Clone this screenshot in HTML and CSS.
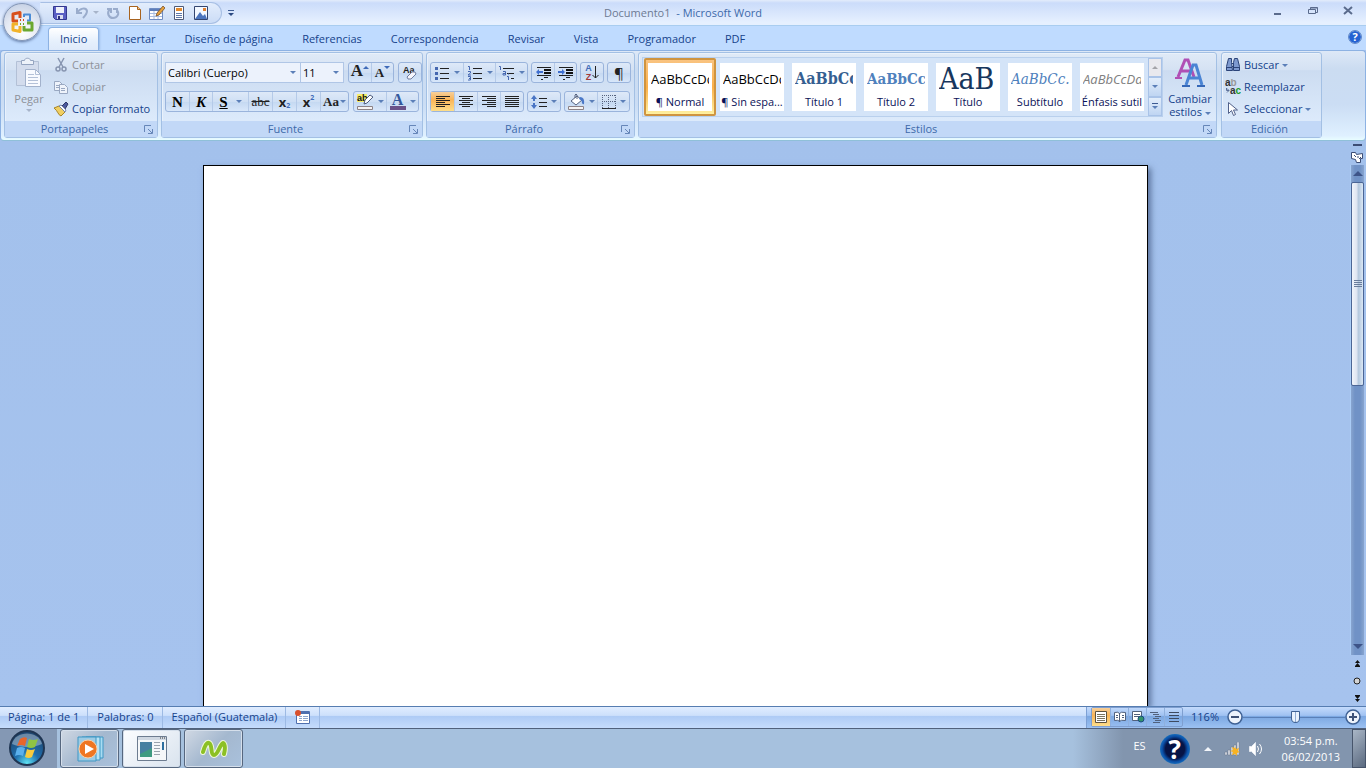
FILE: index.html
```html
<!DOCTYPE html>
<html lang="es">
<head>
    <meta charset="UTF-8">
    <meta name="viewport" content="width=device-width, initial-scale=1.0">
    <title>Documento1 - Microsoft Word</title>
    <link rel="stylesheet" href="styles.css">
</head>
<body>
    <header class="titlebar">
        <button class="office-button" aria-label="Botón de Office">
            <svg width="26" height="26" viewBox="0 0 26 26" fill="none" stroke-width="3" stroke-linejoin="round">
                <path d="M11 9V3.500L4 5v7h5" stroke="#d8501c"/>
                <path d="M15 8V5.500h6v6h-3" stroke="#4b8cd6" stroke-width="2"/>
                <path d="M9 15H4v6l7 1.500V17" stroke="#f2b32a"/>
                <path d="M18 14h5v7h-8v-4" stroke="#6ba82f"/>
                <path d="M11 11h1M14 11h1" stroke="#d8501c" stroke-width="2"/>
                <path d="M11 15h1M14 15h1" stroke="#6ba82f" stroke-width="2"/>
            </svg>
        </button>
        <div class="title-left">
            <div class="quick-access">
                <button aria-label="Guardar">
                    <svg width="16" height="16" viewBox="0 0 16 16">
                        <path d="M1.500 1.500h13v13h-11l-2-2z" fill="#5a5fc4" stroke="#34388f"/>
                        <path d="M4 2h8v6H4z" fill="#eef1fb"/>
                        <path d="M5 10h6v4H5z" fill="#d9dcf0"/>
                        <path d="M6 11h2v3H6z" fill="#2b2f77"/>
                    </svg>
                </button>
                <button class="undo" aria-label="Deshacer">
                    <svg width="16" height="16" viewBox="0 0 16 16" fill="none" stroke="#9aaccc" stroke-width="2">
                        <path d="M3 3v5h5M3 8c3-5 9-6 10-2 0 3-2 5-4 7"/>
                    </svg>
                    <span class="caret faded"></span>
                </button>
                <button aria-label="Rehacer">
                    <svg width="16" height="16" viewBox="0 0 16 16" fill="none" stroke="#9aaccc" stroke-width="2">
                        <path d="M5 4c-4 4-1 9 3 9s7-4 4-8M8 4h4v4M2 4h4v4"/>
                    </svg>
                </button>
                <button aria-label="Nuevo">
                    <svg width="16" height="16" viewBox="0 0 16 16">
                        <path d="M2.500 1.500h8l3 3v10h-11z" fill="#fff" stroke="#a8631f"/>
                        <path d="M10.500 1.500v3h3" fill="#f6c788" stroke="#a8631f"/>
                    </svg>
                </button>
                <button aria-label="Dibujar tabla">
                    <svg width="16" height="16" viewBox="0 0 16 16">
                        <path d="M.5 3.500h13v11H.5z" fill="#fff" stroke="#6f8cc2"/>
                        <path d="M1 4h12v2H1z" fill="#5c7dba"/>
                        <path d="M1 8.500h12M1 11.500h12M5 6v8M9 6v8" stroke="#a9bde0"/>
                        <path d="M7 11l1-3 6-7 2 2-6 7z" fill="#e6a13c" stroke="#694424" stroke-width=".7"/>
                    </svg>
                </button>
                <button aria-label="Vista previa">
                    <svg width="16" height="16" viewBox="0 0 16 16">
                        <path d="M3.500 1.500h9v13h-9z" fill="#fff" stroke="#4e5a78"/>
                        <path d="M5 3h6v3H5z" fill="#e58b2c"/>
                        <path d="M5 8.500h6M5 10.500h6M5 12.500h6" stroke="#6078a8"/>
                    </svg>
                </button>
                <button aria-label="Imagen">
                    <svg width="16" height="16" viewBox="0 0 16 16">
                        <path d="M1.500 1.500h13v13h-13z" fill="#f3f8ff" stroke="#34456f"/>
                        <path d="M2 14l5-7 3 4 2-2 2 5z" fill="#4b74bd"/>
                        <path d="M10 3h3v3h-3z" fill="#e08030"/>
                    </svg>
                </button>
            </div>
            <button class="customize" aria-label="Personalizar barra"><span class="caret dark"></span></button>
        </div>
        <h1 class="window-title"><span class="document-name">Documento1</span> &nbsp;- Microsoft Word</h1>
        <div class="window-buttons">
            <button aria-label="Minimizar">
                <svg width="10" height="10" viewBox="0 0 10 10"><path d="M1 7h7v2H1z" fill="#5a6b8c"/></svg>
            </button>
            <button aria-label="Restaurar">
                <svg width="10" height="10" viewBox="0 0 10 10" fill="none" stroke="#5a6b8c"><path d="M2.500 3V1.500h7v5H8M.5 3.500h7v4h-7zM2.500 2h7"/></svg>
            </button>
            <button aria-label="Cerrar">
                <svg width="10" height="10" viewBox="0 0 10 10" stroke="#5a6b8c" stroke-width="2"><path d="M1 1l8 7M9 1L1 8"/></svg>
            </button>
        </div>
    </header>

    <nav class="tabs">
        <button class="tab active">Inicio</button>
        <button class="tab">Insertar</button>
        <button class="tab">Diseño de página</button>
        <button class="tab">Referencias</button>
        <button class="tab">Correspondencia</button>
        <button class="tab">Revisar</button>
        <button class="tab">Vista</button>
        <button class="tab">Programador</button>
        <button class="tab">PDF</button>
        <button class="help" aria-label="Ayuda">?</button>
    </nav>

    <section class="ribbon">
        <div class="group clipboard">
            <div class="group-body">
                <button class="big-button disabled">
                    <svg width="32" height="32" viewBox="0 0 32 32">
                        <path d="M3.500 4.500h22v24h-22z" fill="#d3dced" stroke="#b3c0d6"/>
                        <path d="M8.500 3.500h3c0-3 6-3 6 0h3v4h-12z" fill="#edf2fa" stroke="#94a4c0"/>
                        <path d="M12.500 12.500h10l5 5v12h-15z" fill="#f8faff" stroke="#a3b2cc"/>
                        <path d="M22.500 12.500v5h5M15 17.500h6M15 20.500h10M15 23.500h10M15 26.500h10" fill="none" stroke="#b4c1d8"/>
                    </svg>
                    <span>Pegar</span>
                    <span class="caret faded"></span>
                </button>
                <div class="stack">
                    <button class="small-button disabled">
                        <svg width="16" height="16" viewBox="0 0 16 16" fill="none" stroke="#8795b0" stroke-width="1.500">
                            <path d="M5 1l5 9M11 1L6 10"/><circle cx="5" cy="12" r="2"/><circle cx="11" cy="12" r="2"/>
                        </svg>
                        Cortar
                    </button>
                    <button class="small-button disabled">
                        <svg width="16" height="16" viewBox="0 0 16 16" fill="#eef3fb" stroke="#99a8c2">
                            <path d="M1.500 2.500h5l3 3v6h-8zM3 6.500h4M3 8.500h4"/><path d="M6.500 5.500h5l3 3v6h-8zM8 9.500h4M8 11.500h4"/>
                        </svg>
                        Copiar
                    </button>
                    <button class="small-button">
                        <svg width="16" height="16" viewBox="0 0 16 16">
                            <path d="M9 5l4-4 2 2-3 5z" fill="#4c5a9e" stroke="#2e3767"/>
                            <path d="M1 7l5-2 6 6-4 4c-3-1-3-5-7-8z" fill="#f0cf63" stroke="#a88526"/>
                            <path d="M6 5l2-1 5 5-1 2z" fill="#fff" stroke="#7584a8"/>
                        </svg>
                        Copiar formato
                    </button>
                </div>
            </div>
            <div class="group-title"><span>Portapapeles</span><button class="launcher" aria-label="Opciones de portapapeles"><svg width="9" height="9" viewBox="0 0 9 9"><path d="M.5 7V.5H7M4 4l4 4M8.500 4v4.500H4" fill="none" stroke="#6686b8"/></svg></button></div>
        </div>

        <div class="group font-group">
            <div class="group-body rows">
                <div class="row">
                    <div class="combos">
                        <label class="combo font-name">
                            <select aria-label="Fuente"><option>Calibri (Cuerpo)</option></select>
                            <span class="caret"></span>
                        </label>
                        <label class="combo font-size">
                            <select aria-label="Tamaño de fuente"><option>11</option></select>
                            <span class="caret"></span>
                        </label>
                    </div>
                    <div class="button-set resize">
                        <button class="serif grow" aria-label="Agrandar fuente">A<span class="mark up"></span></button>
                        <button class="serif shrink" aria-label="Encoger fuente">A<span class="mark down"></span></button>
                    </div>
                    <div class="button-set">
                        <button aria-label="Borrar formato">
                            <svg width="16" height="16" viewBox="0 0 16 16">
                                <text x="1" y="8" font-size="9" class="icon-text" fill="#222">Aa</text>
                                <path d="M5 12l5-5q4-1 4 2l-5 5q-4 1-4-2z" fill="#f6f6fc" stroke="#6f7da0"/>
                            </svg>
                        </button>
                    </div>
                </div>
                <div class="row">
                    <div class="button-set">
                        <button class="serif bold">N</button>
                        <button class="serif bold italic">K</button>
                        <button class="serif bold wide"><u>S</u><span class="caret"></span></button>
                        <button class="serif strike"><s>abc</s></button>
                        <button class="script">x<sub>2</sub></button>
                        <button class="script">x<sup>2</sup></button>
                        <button class="serif case">Aa<span class="caret"></span></button>
                    </div>
                    <div class="button-set">
                        <button class="wide" aria-label="Color de resaltado">
                            <svg width="18" height="17" viewBox="0 0 18 17">
                                <path d="M1 1h10v8H1z" fill="#f6ee6b"/>
                                <text x="1" y="8" font-size="9" class="icon-text" fill="#111">ab</text>
                                <path d="M8 11l1-4 5-5 3 2-6 6z" fill="#fff" stroke="#4c5b7c"/>
                                <path d="M1.500 13.500h15v3h-15z" fill="#f6f4f4" stroke="#8c8286"/>
                            </svg>
                            <span class="caret"></span>
                        </button>
                        <button class="wide" aria-label="Color de fuente">
                            <span class="font-color">A</span>
                            <span class="caret"></span>
                        </button>
                    </div>
                </div>
            </div>
            <div class="group-title"><span>Fuente</span><button class="launcher" aria-label="Opciones de fuente"><svg width="9" height="9" viewBox="0 0 9 9"><path d="M.5 7V.5H7M4 4l4 4M8.500 4v4.500H4" fill="none" stroke="#6686b8"/></svg></button></div>
        </div>

        <div class="group paragraph">
            <div class="group-body rows">
                <div class="row">
                    <div class="button-set">
                        <button class="wide" aria-label="Viñetas">
                            <svg width="16" height="16" viewBox="0 0 16 16"><path d="M6 3.500h9M6 8.500h9M6 13.500h9" stroke="#222"/><path d="M1 2h3v3H1zM1 7h3v3H1zM1 12h3v3H1z" fill="#4567b0"/></svg>
                            <span class="caret"></span>
                        </button>
                        <button class="wide" aria-label="Numeración">
                            <svg width="16" height="16" viewBox="0 0 16 16"><path d="M6 3.500h9M6 8.500h9M6 13.500h9" stroke="#222"/><path d="M1 1.500h1.500V5M1 6.500h2.500v1.500L1 10h3M1 11.500h2.500v3.500H1M2 13.500h1" fill="none" stroke="#4567b0"/></svg>
                            <span class="caret"></span>
                        </button>
                        <button class="wide" aria-label="Lista multinivel">
                            <svg width="17" height="16" viewBox="0 0 17 16"><path d="M5 3.500h11M9 8.500h7M13 13.500h3" stroke="#222"/><path d="M1 1.500h1.500V5M5 6.500h2.500V10H5V8.500h2M9 11.500h1.500V15M10 9h1" fill="none" stroke="#4567b0"/></svg>
                            <span class="caret"></span>
                        </button>
                    </div>
                    <div class="button-set">
                        <button aria-label="Disminuir sangría">
                            <svg width="17" height="16" viewBox="0 0 17 16"><path d="M2 2.500h14M9 4.500h7M9 7.500h5M2 10.500h14M9 12.500h4M6 14.500h2" stroke="#222"/><path d="M9 5h7M9 8h7" stroke="#111" stroke-width="2"/><path d="M1 7l3-3v2h4v2H4v2z" fill="#3f6fd0"/></svg>
                        </button>
                        <button aria-label="Aumentar sangría">
                            <svg width="17" height="16" viewBox="0 0 17 16"><path d="M2 2.500h14M9 4.500h7M9 7.500h5M2 10.500h14M9 12.500h4M6 14.500h2" stroke="#222"/><path d="M9 5h7M9 8h7" stroke="#111" stroke-width="2"/><path d="M8 7L5 4v2H1v2h4v2z" fill="#3f6fd0"/></svg>
                        </button>
                    </div>
                    <div class="button-set">
                        <button class="sort" aria-label="Ordenar">
                            <span class="sort-letters"><b>A</b><b>Z</b></span>
                            <svg width="7" height="15" viewBox="0 0 7 15"><path d="M3.500 1v12M.5 10l3 3 3-3" fill="none" stroke="#222"/></svg>
                        </button>
                    </div>
                    <div class="button-set">
                        <button class="pilcrow">¶</button>
                    </div>
                </div>
                <div class="row">
                    <div class="button-set align">
                        <button class="pressed" aria-label="Alinear a la izquierda">
                            <svg width="14" height="13" viewBox="0 0 14 13"><path d="M0 1.500h14M0 3.500h9M0 5.500h14M0 7.500h9M0 9.500h14M0 11.500h9" stroke="#222"/></svg>
                        </button>
                        <button aria-label="Centrar">
                            <svg width="14" height="13" viewBox="0 0 14 13"><path d="M0 1.500h14M3 3.500h8M0 5.500h14M3 7.500h8M0 9.500h14M3 11.500h8" stroke="#222"/></svg>
                        </button>
                        <button aria-label="Alinear a la derecha">
                            <svg width="14" height="13" viewBox="0 0 14 13"><path d="M0 1.500h14M5 3.500h9M0 5.500h14M5 7.500h9M0 9.500h14M5 11.500h9" stroke="#222"/></svg>
                        </button>
                        <button aria-label="Justificar">
                            <svg width="14" height="13" viewBox="0 0 14 13"><path d="M0 1.500h14M0 3.500h14M0 5.500h14M0 7.500h14M0 9.500h14M0 11.500h14" stroke="#222"/></svg>
                        </button>
                    </div>
                    <div class="button-set">
                        <button class="wide" aria-label="Interlineado">
                            <svg width="16" height="16" viewBox="0 0 16 16"><path d="M8 4.500h8M8 8.500h8M8 12.500h8" stroke="#222"/><path d="M0 5l3-4 3 4H4v2H2V5zM0 11l3 4 3-4H4V9H2v2z" fill="#4a75c4"/></svg>
                            <span class="caret"></span>
                        </button>
                    </div>
                    <div class="button-set">
                        <button class="wide" aria-label="Sombreado">
                            <svg width="17" height="17" viewBox="0 0 17 17"><path d="M3 8l6-5 5 4-6 5z" fill="#fff" stroke="#56637f"/><path d="M7 5V2q1-2 2 0v4" fill="none" stroke="#56637f"/><path d="M12 4q5 0 4 7-1 1-2-1 0-3-3-4z" fill="#4a78c8"/><path d="M.5 13.500h15v3H.5z" fill="#f6f4f4" stroke="#8c8286"/></svg>
                            <span class="caret"></span>
                        </button>
                        <button class="wide" aria-label="Bordes">
                            <svg width="14" height="14" viewBox="0 0 14 14"><path d="M0 .5h14M0 6.500h14M.5 0v13M6.500 0v13M13.500 0v13" stroke="#56637f" stroke-dasharray="1 1"/><path d="M0 13.500h14" stroke="#222"/></svg>
                            <span class="caret"></span>
                        </button>
                    </div>
                </div>
            </div>
            <div class="group-title"><span>Párrafo</span><button class="launcher" aria-label="Opciones de párrafo"><svg width="9" height="9" viewBox="0 0 9 9"><path d="M.5 7V.5H7M4 4l4 4M8.500 4v4.500H4" fill="none" stroke="#6686b8"/></svg></button></div>
        </div>

        <div class="group styles-group">
            <div class="group-body">
                <div class="gallery">
                    <button class="style-item selected"><span class="card"><span class="sample">AaBbCcDd</span><span class="style-name">¶ Normal</span></span></button>
                    <button class="style-item"><span class="card"><span class="sample">AaBbCcDd</span><span class="style-name">¶ Sin espa...</span></span></button>
                    <button class="style-item"><span class="card"><span class="sample heading1">AaBbCc</span><span class="style-name">Título 1</span></span></button>
                    <button class="style-item"><span class="card"><span class="sample heading2">AaBbCc</span><span class="style-name">Título 2</span></span></button>
                    <button class="style-item"><span class="card"><span class="sample title">AaB</span><span class="style-name">Título</span></span></button>
                    <button class="style-item"><span class="card"><span class="sample subtitle">AaBbCc.</span><span class="style-name">Subtítulo</span></span></button>
                    <button class="style-item"><span class="card"><span class="sample subtle">AaBbCcDd</span><span class="style-name">Énfasis sutil</span></span></button>
                    <div class="gallery-scroll">
                        <button class="off" aria-label="Fila anterior"><span class="caret flip"></span></button>
                        <button aria-label="Fila siguiente"><span class="caret"></span></button>
                        <button class="more" aria-label="Más"><span class="caret"></span></button>
                    </div>
                </div>
                <button class="big-button change-styles">
                    <svg width="32" height="32" viewBox="0 0 32 32">
                        <path d="M4 20L11 3h3l6 17M7 14h10" fill="none" stroke="#b04fb5" stroke-width="3"/>
                        <path d="M1 21h7M15 21h6" stroke="#b04fb5" stroke-width="2"/>
                        <path d="M12 28L19 8h3l6 20M15 21h11" fill="none" stroke="#4a84d4" stroke-width="3"/>
                        <path d="M8 29h8M23 29h8" stroke="#3568b8" stroke-width="2"/>
                    </svg>
                    <span>Cambiar</span>
                    <span>estilos <span class="caret"></span></span>
                </button>
            </div>
            <div class="group-title"><span>Estilos</span><button class="launcher" aria-label="Opciones de estilos"><svg width="9" height="9" viewBox="0 0 9 9"><path d="M.5 7V.5H7M4 4l4 4M8.500 4v4.500H4" fill="none" stroke="#6686b8"/></svg></button></div>
        </div>

        <div class="group editing">
            <div class="group-body">
                <div class="stack">
                    <button class="small-button">
                        <svg width="16" height="16" viewBox="0 0 16 16" fill="#7e9ad0" stroke="#2c4479"><path d="M3.500 1.500h3v4l1 8h-6v-4zM9.500 1.500h3l2 8v4h-6v-8zM7 6.500h2M7 9.500h2M2 10.500h5M9 10.500h5"/></svg>
                        Buscar <span class="caret"></span>
                    </button>
                    <button class="small-button">
                        <svg width="16" height="16" viewBox="0 0 16 16">
                            <text x="0" y="7" font-size="10" class="icon-text" fill="#333">a<tspan fill="#999">b</tspan></text>
                            <text x="5" y="15" font-size="10" class="icon-text" fill="#333">a<tspan fill="#1c9a2c">c</tspan></text>
                            <path d="M1.500 9v2.500H4M2 9.500l2 2-2 2" fill="none" stroke="#5a6f98"/>
                        </svg>
                        Reemplazar
                    </button>
                    <button class="small-button">
                        <svg width="16" height="16" viewBox="0 0 16 16"><path d="M3.500 1.500v11l3-3 2 5 2-1-2-4.500h4z" fill="#fff" stroke="#51618a"/></svg>
                        Seleccionar <span class="caret"></span>
                    </button>
                </div>
            </div>
            <div class="group-title"><span>Edición</span></div>
        </div>
    </section>

    <main class="workspace">
        <div class="canvas">
            <div class="paper" contenteditable="true" spellcheck="false" role="textbox" aria-label="Documento"></div>
        </div>
        <div class="scroll-column">
            <div class="split-bar"></div>
            <button class="ruler-toggle" aria-label="Regla">
                <svg width="12" height="12" viewBox="0 0 12 12" fill="#fff" stroke="#3c4d75"><path d="M.5 1.500h4l1 2 6-1v5h-2v4h-4l-1-3-4-1zM3 4l2 2M7 5v2M8 8l2-2"/></svg>
            </button>
            <div class="scrollbar">
                <button class="scroll-arrow" aria-label="Subir"><span class="arrow up"></span></button>
                <div class="thumb"><span class="grip"></span></div>
                <div class="track"></div>
                <button class="scroll-arrow" aria-label="Bajar"><span class="arrow down"></span></button>
            </div>
            <div class="browse">
                <button aria-label="Página anterior"><svg width="7" height="8" viewBox="0 0 7 8"><path d="M3.500 0L6 3H1zM3.500 3L6 6H1zM1 6h5v1H1z" fill="#111"/></svg></button>
                <button aria-label="Seleccionar objeto"><svg width="8" height="8" viewBox="0 0 8 8"><circle cx="4" cy="4" r="3" fill="#d4d4d4" stroke="#222"/></svg></button>
                <button aria-label="Página siguiente"><svg width="7" height="8" viewBox="0 0 7 8"><path d="M3.500 8L6 5H1zM3.500 5L6 2H1zM1 1h5v1H1z" fill="#111"/></svg></button>
            </div>
        </div>
    </main>

    <footer class="statusbar">
        <button class="status-item">Página: 1 de 1</button>
        <button class="status-item">Palabras: 0</button>
        <button class="status-item">Español (Guatemala)</button>
        <button class="status-item macro" aria-label="Grabar macro">
            <svg width="16" height="14" viewBox="0 0 16 14"><path d="M1.500 1.500h13v12h-13z" fill="#fff" stroke="#4f6fae"/><path d="M2 2h12v2H2z" fill="#4f6fae"/><path d="M4 6.500h3M8 6.500h5M4 8.500h3M8 8.500h5M4 10.500h3M8 10.500h5" stroke="#8da4cd"/><circle cx="3" cy="3" r="3" fill="#d9502e"/></svg>
        </button>
        <div class="status-right">
            <div class="views">
                <button class="pressed" aria-label="Diseño de impresión"><svg width="14" height="12" viewBox="0 0 14 12"><path d="M1.500.5h11v11h-11z" fill="#fff" stroke="#5b5240"/><path d="M3 3.500h8M3 5.500h8M3 7.500h8M3 9.500h8" stroke="#7b745f"/></svg></button>
                <button aria-label="Lectura"><svg width="14" height="12" viewBox="0 0 14 12" fill="#fff" stroke="#51617d"><path d="M1.500 1.500q4-1 5 1 1-2 6-1v8q-5-1-6 1-1-2-5-1zM6.500 2v9M3 4.500h2M3 6.500h2M9 4.500h2M9 6.500h2"/></svg></button>
                <button aria-label="Diseño web"><svg width="14" height="12" viewBox="0 0 14 12"><path d="M1.500.5h9v9h-9z" fill="#fff" stroke="#51617d"/><path d="M3 3.500h6M3 5.500h5" stroke="#51617d"/><circle cx="10" cy="8" r="3" fill="#31936b" stroke="#1c4a80"/></svg></button>
                <button aria-label="Esquema"><svg width="14" height="12" viewBox="0 0 14 12"><path d="M1 1.500h8M4 3.500h6M6 5.500h6M4 7.500h6M6 9.500h6M4 11.500h7" stroke="#51617d"/></svg></button>
                <button aria-label="Borrador"><svg width="14" height="12" viewBox="0 0 14 12"><path d="M2 1.500h10M2 4.500h10M2 7.500h10M2 10.500h10" stroke="#3e4a60"/></svg></button>
            </div>
            <button class="zoom-value">116%</button>
            <button class="zoom-step" aria-label="Alejar"><svg width="16" height="16" viewBox="0 0 16 16"><circle cx="8" cy="8" r="7" fill="#edf3fc" stroke="#3f6194" stroke-width="1.500"/><path d="M4 8h8" stroke="#3f5277" stroke-width="2"/></svg></button>
            <input class="zoom-slider" type="range" min="0" max="100" value="52" aria-label="Zoom">
            <button class="zoom-step" aria-label="Acercar"><svg width="16" height="16" viewBox="0 0 16 16"><circle cx="8" cy="8" r="7" fill="#edf3fc" stroke="#3f6194" stroke-width="1.500"/><path d="M4 8h8M8 4v8" stroke="#3f5277" stroke-width="2"/></svg></button>
        </div>
    </footer>

    <div class="taskbar">
        <div class="start-area">
            <button class="start" aria-label="Inicio">
                <svg width="38" height="38" viewBox="0 0 38 38">
                    <defs>
                        <radialGradient id="orb" cx=".5" cy=".95" r=".9">
                            <stop offset="0" stop-color="#5fe4f4"/><stop offset=".4" stop-color="#1f6fae"/><stop offset="1" stop-color="#1f466f"/>
                        </radialGradient>
                    </defs>
                    <circle cx="19" cy="19" r="17" fill="url(#orb)" stroke="#1f3552" stroke-width="2"/>
                    <path d="M4 15C7 1 31 1 34 15 26 19 12 19 4 15z" fill="#fff" opacity=".35"/>
                    <path d="M12 10q4-3 7-1l-2 8q-4-2-8 0z" fill="#e8662c"/>
                    <path d="M21 10q4 2 9 0l-3 8q-4 2-8 0z" fill="#8fc443"/>
                    <path d="M9 19q4-2 8 0l-2 8q-4-2-8 0z" fill="#5bb0ec"/>
                    <path d="M19 20q4 2 8 0l-3 8q-3 2-7 0z" fill="#f7cb3e"/>
                </svg>
            </button>
        </div>
        <button class="task" aria-label="Reproductor">
            <svg width="28" height="28" viewBox="0 0 28 28">
                <path d="M10 2h17v21H10z" fill="#a9dcf2" stroke="#3f97c4"/><path d="M6 2h18v23H6z" fill="#b9e3f5" stroke="#3f97c4"/><path d="M2 2h18v24H2z" fill="#9dcbe4" stroke="#3f97c4"/>
                <circle cx="12" cy="14" r="9" fill="#ef7622" stroke="#fbd0a8"/><path d="M9 9l9 5-9 5z" fill="#fff"/>
            </svg>
        </button>
        <button class="task current" aria-label="Word">
            <svg width="30" height="26" viewBox="0 0 30 26">
                <path d="M.5.500h29v24H.5z" fill="#f5f7f9" stroke="#6d7c90"/><path d="M1 1h28v3H1z" fill="#d0d8e2"/><path d="M23 2h1M25 2h1M27 2h1" stroke="#333"/>
                <path d="M3 6h12v15H3z" fill="#3f9a80"/><path d="M3 6h12v6L3 18z" fill="#477fa0"/><path d="M17 6.500h6M17 9.500h6M17 12.500h6M17 15.500h6M17 18.500h6" stroke="#9aa3ad"/><path d="M25 6h2v8h-2z" fill="#2e6f9f"/>
            </svg>
        </button>
        <button class="task" aria-label="Movistar">
            <svg width="28" height="20" viewBox="0 0 28 20" fill="none" stroke-linecap="round" stroke-linejoin="round">
                <path d="M3 13C5 6 7 3 9 4c4 2 1 12 5 12s5-9 9-12c3 2 2 7 1 11" stroke="#eff8da" stroke-width="6"/>
                <path d="M3 13C5 6 7 3 9 4c4 2 1 12 5 12s5-9 9-12c3 2 2 7 1 11" stroke="#8cc024" stroke-width="4"/>
            </svg>
        </button>
        <div class="tray">
            <span class="language">ES</span>
            <button class="assist" aria-label="Asistencia">?</button>
            <button class="tray-more" aria-label="Mostrar iconos ocultos"><span class="arrow up"></span></button>
            <button aria-label="Red"><svg width="16" height="14" viewBox="0 0 16 14"><path d="M1 10h2v3H1zM4 8h2v5H4zM7 5h2v8H7zM10 3h2v10h-2zM13 0h2v13h-2z" fill="#e5e8ee" stroke="#697588" stroke-width=".5"/><path d="M11 4l1 3 3-1-1 3 2 1-3 1v3l-2-2-3 1 1-3-3-1 3-1-1-3 3 1z" fill="#f8b322"/></svg></button>
            <button aria-label="Volumen"><svg width="16" height="14" viewBox="0 0 16 14"><path d="M1.500 4.500h2l4-4v13l-4-4h-2z" fill="#fff" stroke="#e4e9f0"/><path d="M9.500 4q2 3 0 6M11.500 2q4 5 0 10" fill="none" stroke="#fff"/></svg></button>
            <div class="clock"><time>03:54 p.m.</time><time>06/02/2013</time></div>
            <button class="show-desktop" aria-label="Mostrar escritorio"></button>
        </div>
    </div>
</body>
</html>
```
FILE: styles.css
```css
* {
    box-sizing: border-box;
}
body {
    margin: 0;
    height: 100vh;
    display: flex;
    flex-direction: column;
    overflow: hidden;
    font-family: "Open Sans", "Noto Sans", sans-serif;
    font-size: 11px;
    line-height: 16px;
    color: #15428b;
    background-color: #a5c1ed;
}
button {
    display: flex;
    align-items: center;
    justify-content: center;
    margin: 0;
    padding: 0;
    border: none;
    background: none;
    color: inherit;
    font: inherit;
    white-space: nowrap;
}
svg {
    display: block;
    flex: none;
}
.icon-text {
    font-family: "Liberation Sans", sans-serif;
    font-weight: bold;
}
.caret {
    display: inline-block;
    flex: none;
    border: 3px solid transparent;
    border-top-color: #5b7fb8;
    border-bottom: none;
    vertical-align: middle;
}
.caret.faded {
    border-top-color: #a7b4ca;
}
.caret.flip {
    transform: rotate(180deg);
    border-top-color: #a3a3a8;
}

/* title bar */
.titlebar {
    position: relative;
    display: grid;
    grid-template-columns: 1fr auto 1fr;
    align-items: center;
    flex: none;
    height: 26px;
    background: linear-gradient(#e3ecfb 0, #cbdcfa 3px, #e6f0ff 90%);
    border-bottom: 1px solid #a9cdf0;
}
.office-button {
    position: absolute;
    left: 3px;
    top: 3px;
    z-index: 2;
    width: 38px;
    height: 38px;
    border: 1px solid #8395b5;
    border-radius: 50%;
    background: radial-gradient(circle at 50% 80%, #ffffff, #e4e9f3 50%, #bcc9e0);
    box-shadow: 0 1px 3px #59719c;
}
.title-left {
    display: flex;
    align-items: center;
    padding-left: 40px;
}
.quick-access {
    display: flex;
    align-items: center;
    gap: 6px;
    height: 22px;
    padding: 0 12px 0 11px;
    border: 1px solid #a7bfe4;
    border-left-color: transparent;
    border-radius: 0 11px 11px 0;
    background: linear-gradient(#e3edfc, #cbdcf6);
}
.undo {
    gap: 3px;
}
.customize {
    width: 18px;
    height: 20px;
    flex-direction: column;
    gap: 2px;
}
.customize::before,
.more::before {
    content: "";
    width: 6px;
    border-top: 1px solid #3c5a92;
}
.caret.dark {
    border-top-color: #2c4a82;
}
.window-title {
    margin: 0;
    font-size: 11px;
    font-weight: normal;
    color: #3e6aaa;
}
.document-name {
    color: #6d7a92;
}
.window-buttons {
    display: flex;
    justify-content: flex-end;
    gap: 25px;
    padding: 0 13px 4px 0;
}

/* tabs */
.tabs {
    display: flex;
    flex: none;
    gap: 5px;
    height: 24px;
    padding: 1px 4px 0 48px;
    background-color: #bfdbff;
}
.tab {
    padding: 0 12px;
}
.tab.active {
    padding: 0 11px;
    border: 1px solid #8db2e3;
    border-bottom: none;
    border-radius: 4px 4px 0 0;
    background: linear-gradient(#ffffff, #e6f0fc 60%, #dfeafa);
    box-shadow: 1px 0 2px #9dbde8;
    margin-right: -1px;
}
.help {
    width: 14px;
    height: 14px;
    margin: 3px 0 0 auto;
    border: 1px solid #dbe9fb;
    border-radius: 50%;
    outline: 1px solid #5c87cb;
    outline-offset: -1px;
    background-color: #2462d2;
    color: #ffffff;
    font-weight: bold;
}

/* ribbon */
.ribbon {
    display: flex;
    flex: none;
    gap: 3px;
    height: 91px;
    padding: 1px 3px 2px;
    border: 1px solid #8db2e3;
    border-bottom-color: #8fc0d8;
    border-radius: 4px;
    background: linear-gradient(#dde8f7, #cbdcf1 20%, #cbddf4 60%, #dff0ff 95%, #e8fdff);
}
.group {
    display: flex;
    flex-direction: column;
    border: 1px solid #a3c0e4;
    border-radius: 3px;
    background: linear-gradient(#e0eaf7, #d5e2f3 20%, #ccdcf1 21%, #dceafb 80%);
    box-shadow: inset 1px 1px 0 #e9f1fb;
}
.group-body {
    display: flex;
    flex: 1;
    min-height: 0;
    padding: 0 3px;
}
.group-title {
    display: flex;
    align-items: center;
    flex: none;
    height: 16px;
    padding-right: 4px;
    background-color: #c2d8f7;
    color: #3e6aaa;
}
.group-title span {
    flex: 1;
    text-align: center;
}
.rows {
    flex-direction: column;
    gap: 8px;
    padding-top: 9px;
}
.row {
    display: flex;
    gap: 4px;
    height: 21px;
}
.stack {
    display: flex;
    flex-direction: column;
    align-items: flex-start;
    padding-top: 1px;
}
.small-button {
    height: 22px;
    gap: 3px;
}
.big-button {
    flex-direction: column;
    justify-content: flex-start;
    padding-top: 4px;
    line-height: 13px;
}
.big-button svg {
    margin-bottom: 3px;
}
.big-button .faded {
    margin-top: 4px;
}
.disabled {
    color: #8d9199;
}
.clipboard {
    width: 154px;
}
.clipboard .group-body {
    gap: 3px;
}
.clipboard .big-button {
    width: 42px;
}

/* button strips */
.button-set {
    display: flex;
    border: 1px solid #9ab4dc;
    border-radius: 3px;
    background: linear-gradient(#dee9f8, #cfdff4 50%, #c4d8f1 51%, #d8e7fa);
}
.button-set button {
    width: 22px;
    color: #222222;
}
.button-set button + button {
    border-left: 1px solid #b5cae8;
}
.button-set .wide {
    width: 32px;
    gap: 4px;
}
.font-group {
    width: 262px;
}
.combos {
    display: flex;
}
.combo {
    display: flex;
    align-items: center;
    justify-content: space-between;
    padding-right: 4px;
    border: 1px solid #b0c6e6;
    background-color: #ecf2fc;
}
.combo select {
    flex: 1;
    min-width: 0;
    padding: 0 2px;
    border: none;
    appearance: none;
    background: none;
    color: #000000;
    font: inherit;
}
.font-name {
    width: 136px;
}
.font-size {
    width: 43px;
    border-left: none;
}
.serif {
    font-family: "Liberation Serif", serif;
}
.button-set .bold {
    width: 23px;
    font-weight: bold;
    font-size: 15px;
    color: #000000;
}
.button-set .bold.wide {
    width: 36px;
    gap: 8px;
}
.italic {
    font-style: italic;
}
.grow {
    font-size: 17px;
}
.shrink {
    font-size: 13px;
    line-height: 19px;
}
.grow,
.shrink {
    align-items: flex-start;
    font-weight: bold;
}
.mark {
    border: 3px solid transparent;
    margin-top: 3px;
}
.mark.up {
    border-bottom-color: #3f6ab8;
    border-top: none;
}
.mark.down {
    border-top-color: #3f6ab8;
    border-bottom: none;
}
.button-set .strike {
    width: 24px;
    font-size: 13px;
}
.button-set .script {
    width: 24px;
    font-weight: bold;
    font-size: 13px;
}
.script sub,
.script sup {
    font-size: 7px;
    line-height: 7px;
    color: #3f6ab8;
}
.script sub {
    align-self: flex-end;
    padding-bottom: 2px;
}
.script sup {
    align-self: flex-start;
    padding-top: 2px;
}
.button-set .case {
    width: 28px;
    gap: 1px;
    font-size: 13px;
    font-weight: bold;
}
.font-color {
    width: 16px;
    border-bottom: 4px solid #6a5289;
    font-family: "Liberation Serif", serif;
    font-size: 16px;
    font-weight: bold;
    line-height: 13px;
    color: #34589c;
}
.paragraph {
    width: 209px;
}
.paragraph .row {
    gap: 3px;
}
.align button {
    width: 23px;
}
.pressed {
    background: linear-gradient(#f6cf9b, #f9b457 40%, #fdde8a);
}
.sort-letters {
    display: flex;
    flex-direction: column;
    font-family: "Liberation Sans", sans-serif;
    font-size: 9px;
    line-height: 9px;
    color: #3f6ab8;
}
.sort-letters b + b {
    color: #a33a3a;
}
.pilcrow {
    font-size: 15px;
}

/* style gallery */
.styles-group {
    width: 579px;
}
.styles-group .group-body {
    gap: 4px;
    padding: 4px 3px;
}
.gallery {
    display: flex;
    padding-left: 1px;
    border: 1px solid #b9d0ed;
    background-color: #d4e4f8;
}
.style-item {
    width: 72px;
    border: 2px solid transparent;
}
.style-item.selected {
    border-color: #cf9440;
    border-radius: 2px;
    background: linear-gradient(#f9c380, #fbb04a 50%, #fff0a0);
}
.card {
    display: flex;
    flex-direction: column;
    width: 64px;
    height: 48px;
    flex: none;
    background-color: #ffffff;
    color: #0a1258;
}
.sample {
    display: flex;
    align-items: center;
    height: 31px;
    margin: 0 3px;
    overflow: hidden;
    font-size: 13px;
    color: #000000;
}
.style-name {
    overflow: hidden;
    text-align: center;
}
.heading1,
.heading2,
.title,
.subtitle {
    font-family: "DejaVu Serif Condensed", "DejaVu Serif", serif;
}
.heading1 {
    font-size: 16px;
    font-weight: bold;
    color: #365f91;
}
.heading2 {
    font-size: 15px;
    font-weight: bold;
    color: #4f81bd;
}
.title {
    font-size: 30px;
    color: #17365d;
}
.subtitle {
    font-size: 15px;
    font-style: italic;
    color: #4f81bd;
}
.subtle {
    font-style: italic;
    color: #808080;
}
.gallery-scroll {
    display: flex;
    flex-direction: column;
    width: 14px;
}
.gallery-scroll button {
    flex: 1;
    border: 1px solid #a9c3e8;
    background: linear-gradient(#e2edfb, #bfd5f2);
}
.gallery-scroll .off {
    background: #e9e9ee;
}
.gallery-scroll .more {
    flex-direction: column;
    gap: 2px;
}
.change-styles {
    flex: 1;
    padding-top: 0;
}
.editing {
    width: 101px;
    margin-left: 1px;
}

/* document */
.workspace {
    display: flex;
    flex: 1;
    min-height: 0;
    background: linear-gradient(#a3c1ec, #a6c3ee);
}
.canvas {
    flex: 1;
    display: flex;
    justify-content: center;
    overflow: hidden;
    padding-top: 24px;
}
.paper {
    flex: 0 0 70%;
    border: 1px solid #000000;
    border-bottom: none;
    background-color: #ffffff;
    box-shadow: 3px 3px 6px #5d759f;
    outline: none;
}
.scroll-column {
    display: flex;
    flex-direction: column;
    width: 16px;
    padding: 3px 2px 0 0;
}
.split-bar {
    width: 9px;
    height: 2px;
    margin: 0 auto 3px;
    background-color: #3c4d75;
}
.ruler-toggle {
    height: 16px;
}
.scrollbar {
    display: flex;
    flex-direction: column;
    flex: 1;
    border-left: 1px solid #a9cbf5;
    background: linear-gradient(to right, #88a5cf, #7092c6 30%, #7092c6 70%, #88a5cf);
}
.scroll-arrow {
    height: 17px;
}
.arrow {
    border: 5px solid transparent;
}
.arrow.up {
    border-top: none;
    border-bottom-color: #3d5488;
}
.arrow.down {
    border-bottom: none;
    border-top-color: #3d5488;
}
.thumb {
    display: flex;
    align-items: center;
    justify-content: center;
    flex: 4;
    border: 1px solid #4c6696;
    border-radius: 2px;
    background: linear-gradient(to right, #f0f4fb, #e0e6f2 40%, #b4c8de 60%, #dbe8f5);
}
.grip {
    width: 8px;
    height: 7px;
    background: repeating-linear-gradient(#6a7d9c 0 1px, transparent 1px 2px);
}
.track {
    flex: 5;
}
.browse {
    display: flex;
    flex-direction: column;
    align-items: center;
    height: 51px;
}
.browse button {
    flex: 1;
}

/* status bar */
.statusbar {
    display: flex;
    flex: none;
    height: 22px;
    border-top: 1px solid #567db1;
    background: linear-gradient(#e0edff, #cde0fb 40%, #aecbf5 45%, #c5dcfc);
}
.status-item {
    padding: 0 8px 1px 9px;
    border-right: 1px solid #9dbae4;
}
.status-item:first-child {
    padding-left: 8px;
}
.macro {
    width: 34px;
}
.status-right {
    display: flex;
    align-items: center;
    margin-left: auto;
    padding: 0 5px 1px 4px;
    border-left: 1px solid #7da0d4;
    background: linear-gradient(#c4dbfc, #a0c2f2 40%, #7ca8e2 45%, #9cc1f2);
}
.views {
    display: flex;
    border: 1px solid #7f9fd0;
    border-radius: 2px;
}
.views button {
    width: 18px;
    height: 18px;
}
.views button + button {
    border-left: 1px solid #8fb0de;
}
.zoom-value {
    width: 44px;
}
.zoom-slider {
    width: 102px;
    height: 16px;
    margin: 0;
    appearance: none;
    background: linear-gradient(#5a80b8, #5a80b8) center / 100% 1px no-repeat;
}
.zoom-slider::-webkit-slider-thumb {
    appearance: none;
    width: 9px;
    height: 12px;
    border: 1px solid #3f6194;
    border-radius: 1px 1px 5px 5px;
    background: linear-gradient(to right, #e9f2fe 40%, #90abd3 41% 55%, #e9f2fe 56%);
}

/* taskbar */
.taskbar {
    display: flex;
    flex: none;
    align-items: stretch;
    gap: 3px;
    height: 40px;
    border-top: 1px solid #50617c;
    background-color: #a6c1de;
}
.start-area {
    width: 57px;
    padding-left: 8px;
    background-color: #8498b4;
}
.task {
    width: 59px;
    border: 1px solid #56677f;
    border-radius: 3px;
    background: linear-gradient(135deg, #d1d9e4, #a4b8cf 50%, #a9c1dc);
    box-shadow: inset 0 0 0 1px #d5dfeb;
}
.task.current {
    background: linear-gradient(135deg, #fcfdff, #d9e3ee);
}
.tray {
    display: flex;
    align-items: center;
    margin-left: auto;
    padding-left: 60px;
    background: linear-gradient(to right, #a6c1de, #8295ae 50px);
    color: #ffffff;
}
.tray button {
    margin-right: 8px;
}
.language {
    margin: 0 14px 6px 0;
}
.tray .assist {
    width: 30px;
    height: 30px;
    margin-right: 14px;
    border-radius: 50%;
    background: radial-gradient(circle, #061446 45%, #0b50a8 60%, #34b8ee);
    font-size: 26px;
    font-weight: bold;
    line-height: 30px;
}
.tray .tray-more {
    margin-right: 12px;
}
.tray .arrow {
    border-width: 4px;
    border-top: none;
    border-bottom-color: #f2f5fa;
}
.clock {
    display: flex;
    flex-direction: column;
    align-items: center;
    margin: 0 12px 0 10px;
}
.tray .show-desktop {
    width: 14px;
    align-self: stretch;
    margin: 0;
    border: 1px solid #47556b;
    background: linear-gradient(135deg, #a9b6c6, #5b6a80);
}
```
